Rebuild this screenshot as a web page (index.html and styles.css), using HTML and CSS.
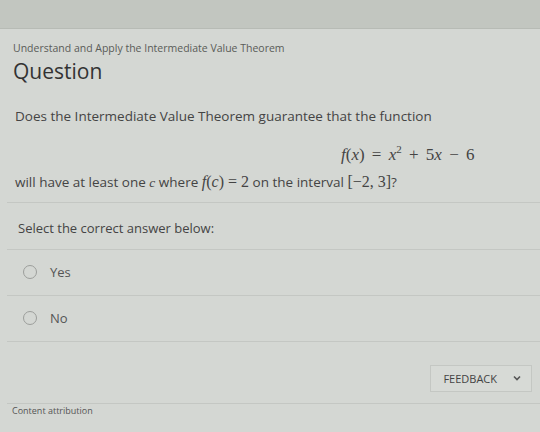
FILE: index.html
```html
<!DOCTYPE html>
<html lang="en">
<head>
  <meta charset="UTF-8">
  <title>Question</title>
  <link rel="stylesheet" href="styles.css">
</head>
<body>
  <div class="topbar"></div>

  <div class="page">
    <div class="crumb">Understand and Apply the Intermediate Value Theorem</div>
    <h1>Question</h1>

    <div class="prompt">
      <p>Does the Intermediate Value Theorem guarantee that the function</p>
      <div class="display">
        <span class="mi">f</span>(<span class="mi">x</span>) = <span class="mi">x</span><sup>2</sup> + 5<span class="mi">x</span> − 6
      </div>
      <p>will have at least one <span class="mi">c</span> where <span class="math"><span class="mi">f</span>(<span class="mi">c</span>) = 2</span> on the interval <span class="math">[−2, 3]</span>?</p>
    </div>

    <div class="answers">
      <div class="row head">Select the correct answer below:</div>
      <label class="row option"><span class="radio"></span>Yes</label>
      <label class="row option"><span class="radio"></span>No</label>
      <div class="row actions">
        <button class="feedback">FEEDBACK
          <svg class="chev" width="8" height="6" viewBox="0 0 8 6"><path d="M1 1.5 L4 4.5 L7 1.5" fill="none" stroke="#555" stroke-width="1.6"/></svg>
        </button>
      </div>
    </div>

    <div class="attrib">Content attribution</div>
  </div>
</body>
</html>
```

FILE: styles.css
```css
body {
  margin: 0;
  background: #d4d7d3;
  font-family: 'Open Sans', sans-serif;
  color: #444;
  height: 432px;
  overflow: hidden;
}

.topbar {
  height: 28px;
  background: #c2c6c0;
  border-bottom: 1px solid #b7bbb5;
}

.page {
  padding-left: 7px;
}

.crumb {
  font-size: 10.5px;
  color: #5a5c58;
  margin: 12px 0 0 6px;
}

h1 {
  font-size: 21px;
  font-weight: 400;
  color: #333;
  margin: 2px 0 0 6px;
  line-height: 28px;
}

.prompt {
  padding: 21px 0 0 8px;
}

.prompt p {
  margin: 0;
  font-size: 13.5px;
  color: #444;
  line-height: 20px;
}

.display {
  font-family: 'Liberation Serif', serif;
  font-size: 17px;
  color: #444;
  margin: 13px 0 7px 326px;
  line-height: 20px;
  word-spacing: 3px;
}

.mi {
  font-family: 'Liberation Serif', serif;
  font-style: italic;
}

.math {
  font-family: 'Liberation Serif', serif;
  font-size: 16px;
}

sup {
  font-size: 11px;
}

.answers {
  margin-top: 9px;
}

.row {
  border-top: 1px solid #c4c7c3;
  display: flex;
  align-items: center;
  font-size: 13px;
}

.head {
  height: 42px;
  padding: 4px 0 0 11px;
  color: #444;
}

.option {
  height: 45px;
  padding-left: 16px;
  color: #555;
}

.radio {
  width: 12px;
  height: 12px;
  border: 1.5px solid #9c9e9b;
  border-radius: 50%;
  margin-right: 13px;
}

.actions {
  height: 38px;
  align-items: flex-start;
  justify-content: flex-end;
  padding: 23px 8px 0 0;
  border-bottom: 1px solid #c4c7c3;
}

.feedback {
  font-family: 'Open Sans', sans-serif;
  font-size: 11px;
  color: #444;
  background: #d7dad6;
  border: 1px solid #c4c7c3;
  height: 27px;
  padding: 0 10px 0 12px;
  display: flex;
  align-items: center;
}

.chev {
  margin-left: 16px;
}

.attrib {
  font-size: 9px;
  line-height: 11px;
  color: #555;
  margin: 1px 0 0 5px;
}
```
